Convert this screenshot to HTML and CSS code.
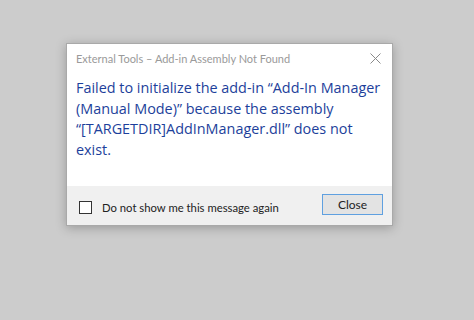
FILE: index.html
```html
<!DOCTYPE html>
<html lang="en">
<head>
  <meta charset="UTF-8">
  <title>External Tools</title>
  <link rel="stylesheet" href="styles.css">
</head>
<body>
  <!-- Dialog -->
  <div class="dialog">
    <div class="dialog-title">
      <span>External Tools – Add-in Assembly Not Found</span>
      <svg class="close-x" width="11" height="11" viewBox="0 0 11 11">
        <path d="M0.5 0.5 L10.5 10.5 M10.5 0.5 L0.5 10.5" stroke="#8a8a8a" stroke-width="1" fill="none"/>
      </svg>
    </div>
    <div class="dialog-body">
      <p class="message">Failed to initialize the add-in “Add-In Manager (Manual Mode)” because the assembly “[TARGETDIR]AddInManager.dll” does not exist.</p>
    </div>
    <div class="dialog-footer">
      <label class="check">
        <span class="box"></span>
        <span>Do not show me this message again</span>
      </label>
      <button class="close-btn">Close</button>
    </div>
  </div>
</body>
</html>
```

FILE: styles.css
```css
* {
  margin: 0;
  padding: 0;
  box-sizing: border-box;
}

body {
  background: #cccccc;
  font-family: "Open Sans", "Noto Sans", sans-serif;
  width: 474px;
  height: 320px;
  overflow: hidden;
  padding: 43px 0 0 66px;
}

.dialog {
  width: 327px;
  height: 183px;
  background: #ffffff;
  border: 1px solid #a9a9a9;
  box-shadow: 0 2px 10px rgba(0, 0, 0, 0.25);
  display: flex;
  flex-direction: column;
}

.dialog-title {
  display: flex;
  justify-content: space-between;
  align-items: center;
  height: 28px;
  padding: 0 11px 0 9px;
  font-family: Lato, "Open Sans", sans-serif;
  font-size: 11px;
  color: #9a9a9a;
}

.dialog-body {
  flex: 1;
  padding: 6px 10px 0 9px;
}

.message {
  font-size: 14.4px;
  line-height: 20.7px;
  color: #1d3f9b;
}

.dialog-footer {
  height: 39px;
  background: #f0f0f0;
  display: flex;
  align-items: center;
  justify-content: space-between;
  padding: 0 9px 0 12px;
}

.check {
  display: flex;
  align-items: center;
  gap: 10px;
  font-family: Lato, "Open Sans", sans-serif;
  font-size: 11.3px;
  color: #222;
  padding-top: 4px;
}

.box {
  width: 13px;
  height: 13px;
  border: 1px solid #333;
  background: #fff;
}

.close-btn {
  width: 61px;
  height: 21px;
  font-family: Lato, "Open Sans", sans-serif;
  font-size: 12px;
  color: #222;
  background: #e3e3e3;
  border: 1px solid #5fa0e0;
  margin-top: -2px;
}
```
